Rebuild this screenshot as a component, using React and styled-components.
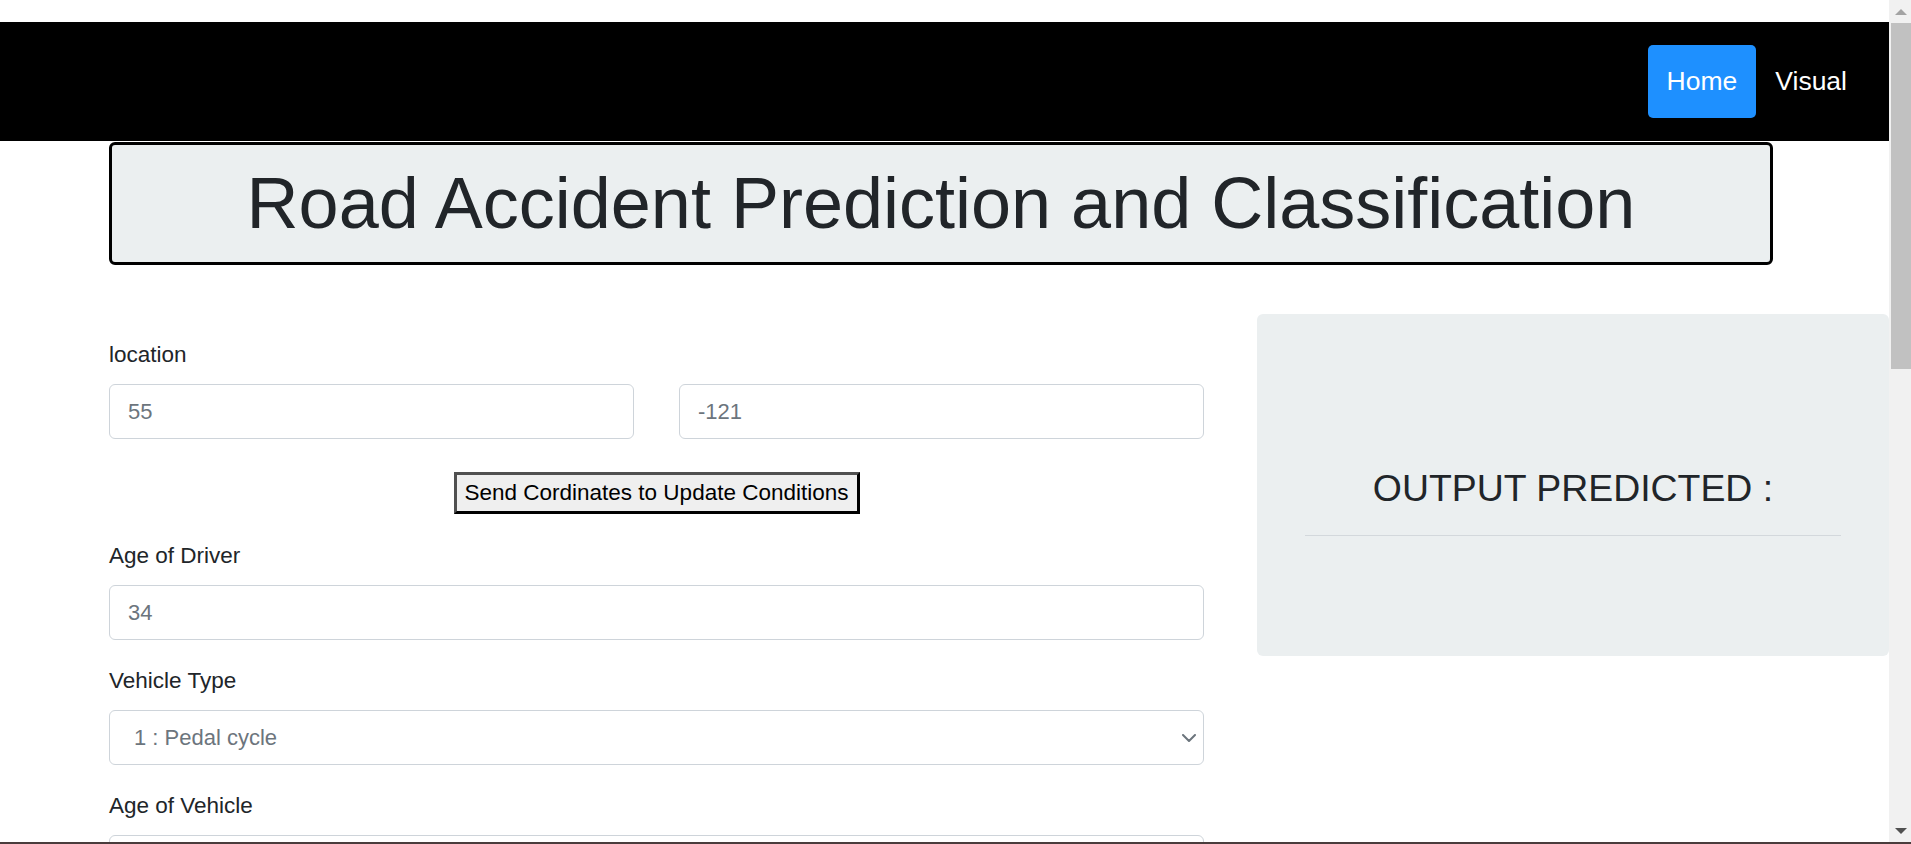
import React from 'react';
import styled, { createGlobalStyle } from 'styled-components';

const GlobalStyle = createGlobalStyle`
    body {
        margin: 0;
        font-family: "Liberation Sans", Arial, sans-serif;
        color: #212529;
        background: #fff;
    }
    * {
        box-sizing: border-box;
    }
`

const vehicleTypes = [
    '1 : Pedal cycle',
    '2 : Motorcycle 50cc and under',
    '3 : Motorcycle 125cc and under',
    '9 : Car',
    '11 : Bus or coach',
];

const Chevron = () => (
    <svg width="14" height="8" viewBox="0 0 14 8" fill="none">
        <polyline points="1,1 7,7 13,1" stroke="#6c757d" strokeWidth="2" strokeLinecap="round" strokeLinejoin="round" />
    </svg>
)

const App = () => {
    return (
        <Page>
            <GlobalStyle />
            <Nav>
                <NavLink $active href="#">Home</NavLink>
                <NavLink href="#">Visual</NavLink>
            </Nav>
            <Main>
                <TitleBox>
                    <h1>Road Accident Prediction and Classification</h1>
                </TitleBox>
                <Content>
                    <Form>
                        <Label>location</Label>
                        <Pair>
                            <TextField type="text" placeholder="55" />
                            <TextField type="text" placeholder="-121" />
                        </Pair>
                        <SendButton type="button">Send Cordinates to Update Conditions</SendButton>

                        <Group>
                            <Label>Age of Driver</Label>
                            <TextField type="text" placeholder="34" />
                        </Group>
                        <Group>
                            <Label>Vehicle Type</Label>
                            <SelectWrap>
                                <Select defaultValue={vehicleTypes[0]}>
                                    {vehicleTypes.map(v => <option key={v}>{v}</option>)}
                                </Select>
                                <span className="chevron"><Chevron /></span>
                            </SelectWrap>
                        </Group>
                        <Group>
                            <Label>Age of Vehicle</Label>
                            <TextField type="text" placeholder="3" />
                        </Group>
                        <Group>
                            <Label>Engine Capacity</Label>
                            <TextField type="text" placeholder="1000" />
                        </Group>
                    </Form>
                    <OutputPanel>
                        <h3>OUTPUT PREDICTED :</h3>
                        <hr />
                    </OutputPanel>
                </Content>
            </Main>

            {/* window scrollbar and the taskbar edge from the captured browser */}
            <ScrollTrack>
                <Arrow $dir="up" />
                <Thumb />
                <Arrow $dir="down" />
            </ScrollTrack>
            <BottomEdge />
        </Page>
    )
}

const Page = styled.div`
    width: 1889px;
    padding-top: 22px;
    padding-bottom: 60px;
`

const Nav = styled.nav`
    height: 119px;
    background: #000;
    display: flex;
    justify-content: flex-end;
    align-items: center;
    padding-right: 23px;
`

const NavLink = styled.a`
    display: flex;
    align-items: center;
    height: 73px;
    padding: 0 19px;
    border-radius: 5px;
    font-size: 26.5px;
    color: #fff;
    text-decoration: none;
    background: ${p => p.$active ? '#1e90ff' : 'transparent'};
`

const Main = styled.main`
    padding-left: 109px;
`

const TitleBox = styled.div`
    width: 1664px;
    height: 123px;
    margin-top: 1px;
    border: 3px solid #000;
    border-radius: 6px;
    background: #ebeff0;
    display: flex;
    align-items: center;
    justify-content: center;
    h1 {
        margin: 0;
        font-size: 72px;
        font-weight: 400;
        line-height: 1.2;
    }
`

const Content = styled.div`
    display: flex;
    align-items: flex-start;
    gap: 53px;
    margin-top: 49px;
`

const Form = styled.form`
    width: 1095px;
    padding-top: 24px;
`

const Group = styled.div`
    margin-bottom: 24px;
`

const Label = styled.label`
    display: block;
    font-size: 22.5px;
    line-height: 33px;
    margin-bottom: 13px;
`

const Pair = styled.div`
    display: grid;
    grid-template-columns: 1fr 1fr;
    gap: 45px;
`

const TextField = styled.input`
    display: block;
    width: 100%;
    height: 55px;
    padding: 0 18px;
    border: 1px solid #ced4da;
    border-radius: 6px;
    font-family: inherit;
    font-size: 22px;
    color: #6c757d;
    background: #fff;
    &::placeholder {
        color: #6c757d;
        opacity: 1;
    }
`

const SendButton = styled.button`
    display: block;
    margin: 33px auto 25px;
    padding: 0 8px;
    height: 42px;
    font-family: inherit;
    font-size: 22.5px;
    line-height: 36px;
    color: #000;
    background: #efefef;
    border: 3px solid;
    border-color: #505050 #000 #000 #505050;
    border-radius: 0;
`

const SelectWrap = styled.div`
    position: relative;
    .chevron {
        position: absolute;
        right: 8px;
        top: 50%;
        transform: translateY(-50%);
        display: flex;
        pointer-events: none;
    }
`

const Select = styled.select`
    display: block;
    width: 100%;
    height: 55px;
    padding: 0 40px 0 24px;
    border: 1px solid #ced4da;
    border-radius: 6px;
    font-family: inherit;
    font-size: 22px;
    color: #6c757d;
    background: #fff;
    appearance: none;
`

const OutputPanel = styled.section`
    width: 632px;
    height: 342px;
    padding: 151px 48px 0;
    border-radius: 6px;
    background: #ebeff0;
    text-align: center;
    h3 {
        margin: 0;
        font-size: 37.4px;
        font-weight: 400;
        line-height: 46px;
    }
    hr {
        margin: 24px 0 0;
        border: 0;
        border-top: 1px solid #d3d8dc;
    }
`

const ScrollTrack = styled.div`
    position: fixed;
    top: 0;
    right: 0;
    bottom: 2px;
    width: 22px;
    background: #f1f1f1;
    display: flex;
    flex-direction: column;
    align-items: flex-end;
`

const Arrow = styled.div`
    width: 20px;
    height: 23px;
    display: flex;
    align-items: center;
    justify-content: center;
    margin-top: ${p => p.$dir === 'down' ? 'auto' : '0'};
    &::after {
        content: '';
        border-left: 6px solid transparent;
        border-right: 6px solid transparent;
        ${p => p.$dir === 'up'
            ? 'border-bottom: 6px solid #a3a3a3;'
            : 'border-top: 6px solid #505050;'}
    }
`

const Thumb = styled.div`
    width: 20px;
    height: 346px;
    background: #c1c1c1;
`

const BottomEdge = styled.div`
    position: fixed;
    left: 0;
    right: 0;
    bottom: 0;
    height: 2px;
    background: #4a3c3c;
`

export default App;
